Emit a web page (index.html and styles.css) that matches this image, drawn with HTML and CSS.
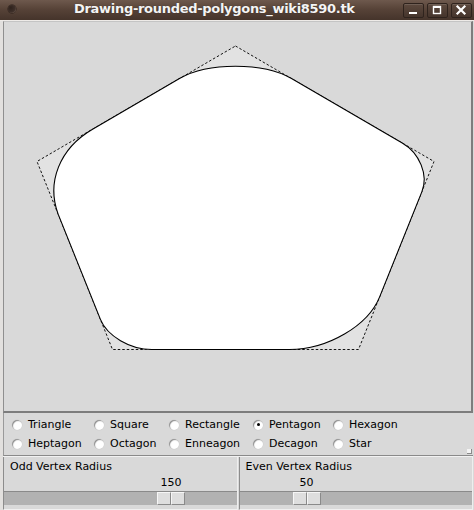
FILE: index.html
```html
<!DOCTYPE html>
<html>
<head>
<meta charset="utf-8">
<link rel="stylesheet" href="styles.css">
</head>
<body>
<div class="window">
  <div class="titlebar">
    <span class="wm-dot"></span>
    <span class="title">Drawing-rounded-polygons_wiki8590.tk</span>
    <div class="wm-buttons">
      <span class="wm-btn"><svg width="20" height="13" viewBox="0 0 20 13"><rect x="6" y="8" width="8" height="2" fill="#fff"/></svg></span>
      <span class="wm-btn"><svg width="20" height="13" viewBox="0 0 20 13"><rect x="6.5" y="2.5" width="7" height="7" fill="none" stroke="#fff" stroke-width="1.4"/><rect x="6" y="2" width="8" height="2" fill="#fff"/></svg></span>
      <span class="wm-btn"><svg width="20" height="13" viewBox="0 0 20 13"><path d="M6.5 2.5 L13.5 9.5 M13.5 2.5 L6.5 9.5" stroke="#fff" stroke-width="2.2" stroke-linecap="square"/></svg></span>
    </div>
  </div>
  <div class="client">
    <div class="canvas">
      <svg width="466" height="389" viewBox="4 22 466 389">
        <polygon points="235.5,46 434,161.5 358.5,349.5 112.5,349.5 37,161.5" fill="#e2e2e2" stroke="#111" stroke-width="1" stroke-dasharray="2.5 2"/>
        <path d="M179.92 78.34 C207.71 62.17 263.29 62.17 291.08 78.34 L402.24 143.02 C419.71 153.18 428.56 175.04 421.92 191.58 L379.64 296.86 C368.01 325.81 327.5 349.5 289.62 349.5 L151.86 349.5 C130.21 349.5 107.06 335.96 100.42 319.42 L58.14 214.14 C46.46 182.56 59.23 148.56 92.58 129.16 Z" fill="#fff" stroke="#000" stroke-width="1.1"/>
      </svg>
    </div>
    <div class="radios">
      <label class="radio"><span class="ind"></span>Triangle</label>
      <label class="radio"><span class="ind"></span>Square</label>
      <label class="radio"><span class="ind"></span>Rectangle</label>
      <label class="radio"><span class="ind on"></span>Pentagon</label>
      <label class="radio"><span class="ind"></span>Hexagon</label>
      <label class="radio"><span class="ind"></span>Heptagon</label>
      <label class="radio"><span class="ind"></span>Octagon</label>
      <label class="radio"><span class="ind"></span>Enneagon</label>
      <label class="radio"><span class="ind"></span>Decagon</label>
      <label class="radio"><span class="ind"></span>Star</label>
      <span class="grip"></span>
    </div>
    <div class="scales">
      <div class="scale">
        <div class="scale-label">Odd Vertex Radius</div>
        <div class="scale-value"><span class="value" style="margin-left:153px">150</span></div>
        <div class="trough"><span class="thumb" style="margin-left:153px"><span class="half"></span><span class="half"></span></span></div>
      </div>
      <div class="scale">
        <div class="scale-label">Even Vertex Radius</div>
        <div class="scale-value"><span class="value" style="margin-left:53px">50</span></div>
        <div class="trough"><span class="thumb" style="margin-left:53px"><span class="half"></span><span class="half"></span></span></div>
      </div>
    </div>
  </div>
</div>
</body>
</html>
```

FILE: styles.css
```css
html, body {
  margin: 0;
  padding: 0;
  background: #d9d9d9;
}
.window {
  width: 474px;
  height: 510px;
  overflow: hidden;
  font-family: "DejaVu Sans", sans-serif;
  font-size: 11px;
  color: #000;
}
.titlebar {
  height: 20px;
  display: flex;
  align-items: flex-start;
  background: linear-gradient(#6e594d, #574338 45%, #45342b);
  color: #f4f4f4;
  position: relative;
}
.wm-dot {
  width: 8px;
  height: 8px;
  margin: 5px 0 0 8px;
  border-radius: 50%;
  background: radial-gradient(circle at 35% 35%, #2e221c, #3f302a 60%, #8a7466);
  box-shadow: 0 0 0 0.5px #2a1f19;
}
.title {
  margin-left: 58px;
  font-weight: bold;
  font-size: 13px;
  letter-spacing: -0.3px;
  line-height: 18px;
  white-space: nowrap;
  text-shadow: 0 0 1px rgba(0,0,0,0.4);
}
.wm-buttons {
  margin-left: auto;
  margin-right: 2px;
  margin-top: 3px;
  display: flex;
  gap: 3px;
}
.wm-btn {
  width: 19px;
  height: 13px;
  border: 1px solid #2f231d;
  border-radius: 2px;
  background: linear-gradient(#5d493e, #45352c);
  box-shadow: inset 0 1px 0 rgba(255,255,255,0.12);
  display: flex;
}
.wm-btn svg {
  display: block;
  margin-left: -1px;
}
.client {
  height: 489px;
  border-top: 1px solid #eeebe8;
  padding: 0 1px 0 3px;
  background: #d9d9d9;
  box-shadow: inset 3px 0 0 #e2e0de;
}
.canvas {
  height: 389px;
  border-top: 1px solid #c4c4c4;
  border-left: 1px solid #8f8f8f;
  border-right: 2px solid #7d7d7d;
  border-bottom: 2px solid #7d7d7d;
  background: #d9d9d9;
}
.canvas svg {
  display: block;
}
.radios {
  position: relative;
  height: 40px;
  padding: 2px 0 0 8px;
  border-left: 1px solid #9a9a9a;
  border-bottom: 1px solid #8a8a8a;
  display: grid;
  grid-template-columns: 82px 75px 84px 80px 1fr;
  grid-auto-rows: 19px;
}
.radio {
  display: flex;
  align-items: center;
  white-space: nowrap;
  line-height: 13px;
}
.ind {
  position: relative;
  width: 10px;
  height: 10px;
  margin-right: 6px;
  border-radius: 50%;
  background: #fff;
  box-shadow: inset 1px 1px 1px #8c8c8c, 0 0 0 0.5px #d0d0d0;
  flex: none;
}
.ind.on::after {
  content: "";
  position: absolute;
  left: 3.5px;
  top: 3.5px;
  width: 3px;
  height: 3px;
  border-radius: 50%;
  background: #000;
}
.grip {
  position: absolute;
  right: 1px;
  bottom: 1px;
  width: 4px;
  height: 4px;
  border-right: 1px solid #8a8a8a;
  border-bottom: 1px solid #8a8a8a;
  background: #f4f4f4;
}
.scales {
  display: flex;
  gap: 1px;
  height: 53px;
  border-top: 1px solid #f2f2f2;
}
.scale {
  flex: 1;
  height: 49px;
  border-left: 1px solid #8c8c8c;
  border-right: 1px solid #eeeeee;
  border-bottom: 1px solid #f0f0f0;
  padding-top: 3px;
}
.scale-label {
  padding-left: 6px;
  line-height: 13px;
  white-space: nowrap;
}
.scale-value {
  margin-top: 3px;
  line-height: 13px;
  display: flex;
}
.value {
  width: 28px;
  text-align: center;
}
.trough {
  margin-top: 2px;
  height: 13px;
  border-top: 1px solid #8a8a8a;
  background: #b2b2b2;
  display: flex;
}
.thumb {
  display: flex;
  height: 13px;
}
.half {
  width: 12px;
  height: 11px;
  border-top: 1px solid #f6f6f6;
  border-left: 1px solid #f6f6f6;
  border-right: 1px solid #8a8a8a;
  border-bottom: 1px solid #8a8a8a;
  background: #dedede;
}
```
